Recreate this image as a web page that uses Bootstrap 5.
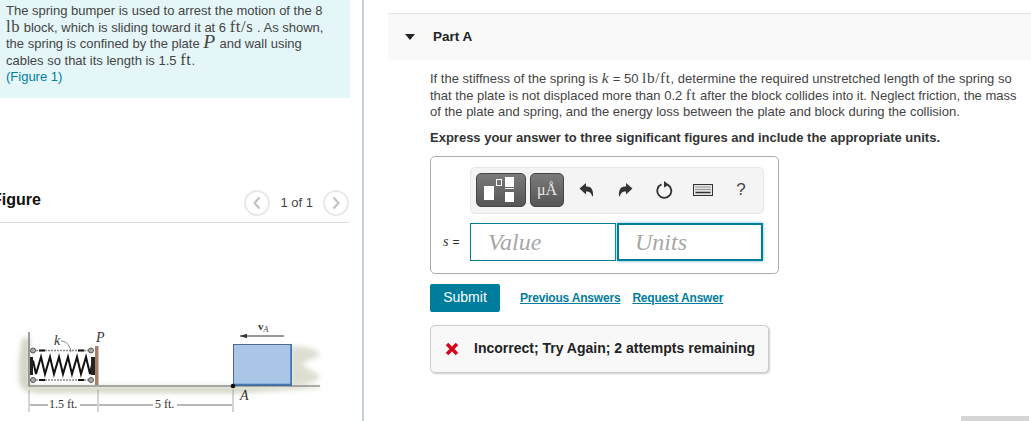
<!DOCTYPE html>
<html lang="en">
<head>
    <meta charset="UTF-8">
    <meta name="viewport" content="width=device-width, initial-scale=1.0">
    <title>Part A</title>
    <link href="https://cdn.jsdelivr.net/npm/bootstrap@5.3.0/dist/css/bootstrap.min.css" rel="stylesheet">
    <script src="https://cdn.jsdelivr.net/npm/bootstrap@5.3.0/dist/js/bootstrap.bundle.min.js"></script>
    <style>
        body {
            height: 421px;
            overflow: hidden;
            background: #fff;
            color: #333;
            font-family: "Liberation Sans", Arial, sans-serif;
            font-size: 13px;
        }
        .mth { font-family: "Liberation Serif", serif; font-size: 1.18em; line-height: 0; letter-spacing: .6px; }
        .left-col { width: 364px; height: 421px; border-right: 2px solid #c5d0dc; flex: none; }
        .intro { width: 350px; height: 98px; background: #e5f6f8; padding: 3px 20px 2px 6px; font-size: 13px; line-height: 16.5px; color: #444; }
        .intro .mth { font-size: 1.28em; }
        .intro i.mth { font-size: 1.5em; }
        .intro a { color: #007da0; text-decoration: none; }
        .fig-head { width: 349px; height: 37px; margin-top: 88px; border-bottom: 1px solid #ddd; }
        .fig-title { font-size: 16px; font-weight: 700; color: #111; margin-left: -8px; line-height: 18px; margin-top: 5px; }
        .pager { margin-top: 4px; }
        .pager-btn { width: 26px; height: 26px; border: 2px solid #e9e9e9; border-radius: 50%; background: #fff; }
        .pager-txt { font-size: 13px; color: #444; margin: 0 10px; }
        .fig-img { display: block; margin-top: 87px; }
        .right-col { flex: 1 1 auto; min-width: 0; height: 421px; }
        .part-bar { margin: 13px 0 0 24px; height: 47px; background: #f9f9f9; border-top: 1px solid #e4e4e4; padding-left: 17px; }
        .part-bar b { font-size: 13.5px; color: #222; margin-left: 18px; }
        .tri { width: 0; height: 0; border-left: 5px solid transparent; border-right: 5px solid transparent; border-top: 6px solid #222; }
        .part-body { padding: 11px 10px 0 66px; }
        .part-body p { margin: 0; line-height: 16.5px; color: #444; }
        .part-body .hint { font-weight: 700; font-size: 13px; line-height: 16px; margin-top: 9px; color: #333; }
        .ans-box { width: 349px; height: 118px; margin-top: 10px; border: 1px solid #aaa; border-radius: 5px; padding: 10px 15px 0 39px; }
        .tool-bar { width: 294px; height: 47px; background: #f4f4f4; border: 1px solid #e6e6e6; border-radius: 5px; padding-left: 5px; }
        .tool-btn { height: 34px; border: 1px solid #444; border-radius: 5px; background: linear-gradient(#7b7b7b, #555); color: #e8e8e8; }
        .tool-icon { width: 30px; }
        .tool-icon.wide { margin-left: 10px; }
        .ans-row { margin-top: 9px; }
        .var-lbl { width: 27px; margin-left: -27px; font-size: 12px; color: #333; }
        .ans-in { width: 146px; height: 38px; border: 1px solid #007c9d; background: #fff; padding-left: 17px; font-family: "Liberation Serif", serif; font-style: italic; font-size: 24px; line-height: 36px; color: #a7a7a7; }
        .ans-in.on { margin-left: 1px; border-width: 2px; box-shadow: 0 0 3px #5db8d0; padding-left: 16px; line-height: 34px; }
        .act-row { margin-top: 10px; }
        .sub-btn { width: 70px; height: 28px; padding: 0; border: 0; border-radius: 2px; background: #007c9d; color: #fff; font-size: 14px; }
        .act-row a { color: #007da0; font-weight: 700; font-size: 12px; letter-spacing: -.2px; margin-top: 5px; }
        .link-a { margin-left: 20px; }
        .link-b { margin-left: 12px; }
        .fb-box { width: 339px; height: 48px; margin-top: 13px; background: #f8f8f8; border: 1px solid #ccc; border-radius: 5px; box-shadow: 1px 1px 2px #ccc; padding-left: 14px; }
        .fb-box b { font-size: 14px; color: #222; margin-left: 15px; white-space: nowrap; }
        .foot-bar { width: 68px; height: 5px; background: #d6d6d6; margin-left: auto; margin-right: 2px; margin-top: auto; }
    </style>
</head>
<body>
<div class="d-flex">

    <!-- Problem and figure -->
    <div class="left-col">
        <div class="intro">
            The spring bumper is used to arrest the motion of the 8 <span class="mth">lb</span> block, which is sliding toward it at 6 <span class="mth">ft/s</span> . As shown, the spring is confined by the plate <i class="mth">P</i> and wall using cables so that its length is 1.5 <span class="mth">ft</span>.<br>
            <a href="#">(Figure 1)</a>
        </div>
        <div class="fig-head d-flex justify-content-between align-items-start">
            <div class="fig-title">Figure</div>
            <div class="pager d-flex align-items-center">
                <div class="pager-btn d-flex align-items-center justify-content-center">
                    <svg width="10" height="14" viewBox="0 0 10 14"><path d="M7.5 1.5 2.5 7l5 5.5" fill="none" stroke="#b9c2c8" stroke-width="2"/></svg>
                </div>
                <span class="pager-txt">1 of 1</span>
                <div class="pager-btn d-flex align-items-center justify-content-center">
                    <svg width="10" height="14" viewBox="0 0 10 14"><path d="M2.5 1.5 7.5 7l-5 5.5" fill="none" stroke="#b9c2c8" stroke-width="2"/></svg>
                </div>
            </div>
        </div>
        <svg class="fig-img" width="340" height="111" viewBox="0 0 340 111">
            <defs>
                <filter id="soft" x="-20%" y="-20%" width="140%" height="140%"><feGaussianBlur stdDeviation="2.500"/></filter>
                <marker id="arr" viewBox="0 0 6 6" refX="6" refY="3" markerWidth="6" markerHeight="6" orient="auto-start-reverse"><path d="M0 1 6 3 0 5z" fill="#333"/></marker>
            </defs>
            <g fill="#d3d6c4" filter="url(#soft)">
                <path d="M22 28h8v48h290v2l-80 5H40l-15-2-6-8V50z"/>
                <path d="M290 36c15 0 28 3 30 9-3 4-14 5-18 9 5 6 15 7 18 13-5 6-18 8-30 8z" opacity=".8"/>
            </g>
            <path d="M29 22v54h291" fill="none" stroke="#666" stroke-width="1.200"/>
            <path d="M33 50.500 36 64 41 47 45 64 50 47 54 64 59 47 63 64 68 47 72 64 77 47 81 64 86 47 90 64 93 50" fill="none" stroke="#111" stroke-width="2"/>
            <path d="M30 47h3v18h-3zM91 47h4v18h-4z" fill="#222"/>
            <g stroke="#888" stroke-width="1.300" stroke-dasharray="2 1"><path d="M33 40.500h58M33 70h58"/></g>
            <g stroke="#111" stroke-width="2"><path d="M39 40.500h6M78 40.500h6M39 70h6M78 70h6"/></g>
            <g fill="#aaa" stroke="#555"><circle cx="33" cy="40.500" r="2.500"/><circle cx="33" cy="70" r="2.500"/><circle cx="91" cy="40.500" r="2.500"/><circle cx="91" cy="70" r="2.500"/></g>
            <rect x="95" y="36" width="3.500" height="39" fill="#a57f6a"/>
            <path d="M61 31c6 0 9 5 10 11" fill="none" stroke="#555" stroke-width=".7"/>
            <rect x="233.500" y="34.500" width="58" height="41" fill="#a9c6e8" stroke="#4d6a86"/>
            <path d="M234 74.500h57M291 35v40" stroke="#3f78b5" stroke-width="1.500"/>
            <circle cx="233" cy="76" r="2.300" fill="#111"/>
            <g font-family="Liberation Serif, serif" fill="#333" font-size="12">
                <text x="54" y="35" font-style="italic" font-size="14">k</text>
                <text x="96" y="32" font-style="italic" font-size="14">P</text>
                <text x="240" y="90" font-style="italic" font-size="14">A</text>
                <text x="258" y="20" font-weight="700" font-size="11">v<tspan font-style="italic" font-weight="400" font-size="8" dy="2">A</tspan></text>
                <text x="49" y="98">1.5 ft.</text>
                <text x="155" y="98">5 ft.</text>
            </g>
            <path d="M284 26H240" stroke="#333" stroke-width="1.200" marker-end="url(#arr)"/>
            <g stroke="#888" stroke-width=".7" fill="none">
                <path d="M29 80v22M98 80v22M233 80v22"/>
                <path d="M30 95H48M80 95H97M99 95H153M177 95H232" stroke="#333"/>
            </g>
        </svg>
    </div>

    <!-- Part A -->
    <div class="right-col d-flex flex-column">
        <div class="part-bar d-flex align-items-center">
            <div class="tri"></div>
            <b>Part A</b>
        </div>
        <div class="part-body">
            <p>If the stiffness of the spring is <i class="mth">k</i> = 50 <span class="mth">lb/ft</span>, determine the required unstretched length of the spring so that the plate is not displaced more than 0.2 <span class="mth">ft</span> after the block collides into it. Neglect friction, the mass of the plate and spring, and the energy loss between the plate and block during the collision.</p>
            <p class="hint">Express your answer to three significant figures and include the appropriate units.</p>

            <div class="ans-box">
                <div class="tool-bar d-flex align-items-center">
                    <div class="tool-btn d-flex align-items-center justify-content-center" style="width:50px">
                        <svg width="38" height="26" viewBox="0 0 38 26">
                            <rect x="2" y="9" width="10" height="14" fill="#fff"/>
                            <rect x="14.500" y="2.500" width="5" height="6" fill="none" stroke="#fff"/>
                            <rect x="23" y="0" width="9" height="10" fill="#fff"/>
                            <rect x="23" y="11" width="9" height="1" fill="#fff"/>
                            <rect x="23" y="15" width="9" height="10" fill="#fff"/>
                        </svg>
                    </div>
                    <div class="tool-btn d-flex align-items-center justify-content-center ms-1" style="width:34px;font-family:'Liberation Serif',serif;font-size:16px">μÅ</div>
                    <div class="tool-icon d-flex justify-content-center ms-2">
                        <svg width="16" height="16" viewBox="0 0 16 16"><path d="M.5 6.500 7 1v3.400h1c4 0 6.500 3 6 9.600-.3.600-.8.600-1 0-.5-2.500-2-4.400-6-4.400V12.500z" fill="#333"/></svg>
                    </div>
                    <div class="tool-icon d-flex justify-content-center ms-2">
                        <svg width="16" height="16" viewBox="0 0 16 16"><path d="M15.500 6.500 9 1v3.400H8c-4 0-6.500 3-6 9.600.3.600.8.600 1 0 .5-2.500 2-4.400 6-4.400V12.500z" fill="#333"/></svg>
                    </div>
                    <div class="tool-icon wide d-flex justify-content-center">
                        <svg width="18" height="18" viewBox="0 0 18 18"><path d="M11.500 3.600A7 7 0 1 1 5.500 3.400" fill="none" stroke="#333" stroke-width="1.800"/><path d="M8 0 13 3.700 8 6.500z" fill="#333"/></svg>
                    </div>
                    <div class="tool-icon d-flex justify-content-center ms-2">
                        <svg width="20" height="12" viewBox="0 0 20 12"><rect x=".5" y=".5" width="19" height="11" fill="#e4e4e4" stroke="#333"/><path d="M2.500 3h15M2.500 5.500h15" stroke="#444" stroke-dasharray="1 1"/><path d="M2.500 8.500h15" stroke="#333" stroke-width="1.500"/></svg>
                    </div>
                    <div class="tool-icon text-center ms-2" style="font-size:17px;color:#444">?</div>
                </div>
                <div class="ans-row d-flex align-items-center">
                    <div class="var-lbl"><i class="mth">s</i> =</div>
                    <div class="ans-in">Value</div>
                    <div class="ans-in on">Units</div>
                </div>
            </div>

            <div class="act-row d-flex align-items-start">
                <button class="sub-btn" type="button">Submit</button>
                <a href="#" class="link-a">Previous Answers</a>
                <a href="#" class="link-b">Request Answer</a>
            </div>

            <div class="fb-box d-flex align-items-center">
                <svg width="14" height="14" viewBox="0 0 14 14"><path d="M2 2l10 10M12 2 2 12" stroke="#d9001b" stroke-width="3.400"/></svg>
                <b>Incorrect; Try Again; 2 attempts remaining</b>
            </div>
        </div>
        <div class="foot-bar"></div>
    </div>
</div>
</body>
</html>
